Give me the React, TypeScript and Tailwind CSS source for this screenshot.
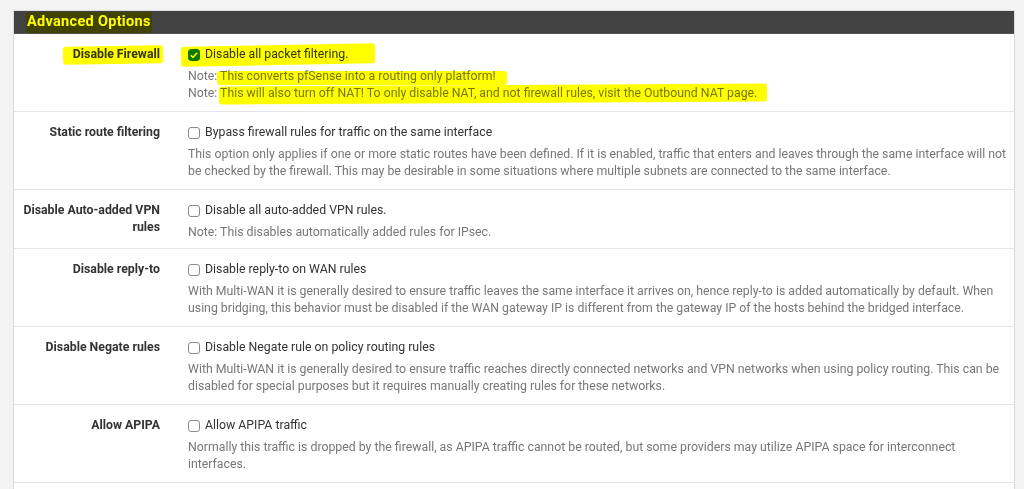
import React from "react";

const ROWS = [
  {
    label: "Static route filtering",
    check: "Bypass firewall rules for traffic on the same interface",
    help: "This option only applies if one or more static routes have been defined. If it is enabled, traffic that enters and leaves through the same interface will not be checked by the firewall. This may be desirable in some situations where multiple subnets are connected to the same interface.",
    pad: "pb-[9px]",
  },
  {
    label: "Disable Auto-added VPN rules",
    check: "Disable all auto-added VPN rules.",
    help: "Note: This disables automatically added rules for IPsec.",
    pad: "pb-[7px]",
  },
  {
    label: "Disable reply-to",
    check: "Disable reply-to on WAN rules",
    help: "With Multi-WAN it is generally desired to ensure traffic leaves the same interface it arrives on, hence reply-to is added automatically by default. When using bridging, this behavior must be disabled if the WAN gateway IP is different from the gateway IP of the hosts behind the bridged interface.",
    pad: "pb-[9px]",
  },
  {
    label: "Disable Negate rules",
    check: "Disable Negate rule on policy routing rules",
    help: "With Multi-WAN it is generally desired to ensure traffic reaches directly connected networks and VPN networks when using policy routing. This can be disabled for special purposes but it requires manually creating rules for these networks.",
    pad: "pb-[9px]",
  },
  {
    label: "Allow APIPA",
    check: "Allow APIPA traffic",
    help: "Normally this traffic is dropped by the firewall, as APIPA traffic cannot be routed, but some providers may utilize APIPA space for interconnect interfaces.",
    pad: "pb-[9px]",
  },
];

function Box({ checked = false }: { checked?: boolean }) {
  return (
    <span
      className={`inline-flex w-[12px] h-[12px] shrink-0 items-center justify-center rounded-[3px] border ${
        checked ? "bg-[#0b78d7] border-[#0b78d7]" : "bg-white border-[#8a8a8a]"
      }`}
    >
      {checked && (
        <svg viewBox="0 0 12 12" className="w-[10px] h-[10px]">
          <path d="M2.2 6.3 L4.8 8.8 L9.8 3.2" fill="none" stroke="white" strokeWidth="1.9" />
        </svg>
      )}
    </span>
  );
}

// translucent marker stroke drawn over the content
function Marker({ className }: { className: string }) {
  return <div className={`absolute bg-[#ffff00] mix-blend-multiply pointer-events-none ${className}`} />;
}

export default function App() {
  return (
    <div
      className="w-[1024px] h-[489px] overflow-hidden bg-[#f3f3f3] pt-[10px] pl-[13px]"
      style={{ fontFamily: "Roboto, 'Liberation Sans', sans-serif" }}
    >
      <div className="relative w-[1002px] border border-[#dcdcdc] bg-white">
        {/* header */}
        <div className="h-[23px] bg-[#424242] border-b border-[#555] flex items-center pl-[13px]">
          <span className="text-white font-bold text-[14.5px] tracking-[0.3px]">Advanced Options</span>
        </div>

        {/* Disable Firewall */}
        <div className="grid grid-cols-[146px_1fr] gap-x-[28px] pt-[12px] pb-[9px] border-b border-[#e5e5e5]">
          <div className="text-right text-[12.3px] leading-[17px] font-bold text-[#333]">Disable Firewall</div>
          <div className="text-[12.3px] leading-[17px] pr-[8px]">
            <label className="flex items-center gap-[5px] text-[#333]">
              <Box checked />
              <span>Disable all packet filtering.</span>
            </label>
            <div className="mt-[5px] text-[#777]">
              <div>Note: This converts pfSense into a routing only platform!</div>
              <div>Note: This will also turn off NAT! To only disable NAT, and not firewall rules, visit the Outbound NAT page.</div>
            </div>
          </div>
        </div>

        {ROWS.map((r) => (
          <div key={r.label} className={`grid grid-cols-[146px_1fr] gap-x-[28px] pt-[12px] ${r.pad} border-b border-[#e5e5e5]`}>
            <div className="text-right text-[12.3px] leading-[17px] font-bold text-[#333] pl-[4px]">{r.label}</div>
            <div className="text-[12.3px] leading-[17px] pr-[6px]">
              <label className="flex items-center gap-[5px] text-[#333]">
                <Box />
                <span>{r.check}</span>
              </label>
              <div className="mt-[5px] text-[#777]">{r.help}</div>
            </div>
          </div>
        ))}
        <div className="h-[20px]" />

        {/* marker strokes */}
        <Marker className="left-[12px] top-[1px] w-[126px] h-[21px] rounded-[3px]" />
        <Marker className="left-[49px] top-[35px] w-[100px] h-[18px] rounded-[3px] -rotate-1" />
        <Marker className="left-[167px] top-[34px] w-[194px] h-[20px] rounded-[3px] -rotate-1" />
        <Marker className="left-[203px] top-[60px] w-[290px] h-[14px] rounded-[3px]" />
        <Marker className="left-[205px] top-[74px] w-[548px] h-[18px] rounded-[3px] -rotate-[0.3deg]" />
      </div>
    </div>
  );
}
